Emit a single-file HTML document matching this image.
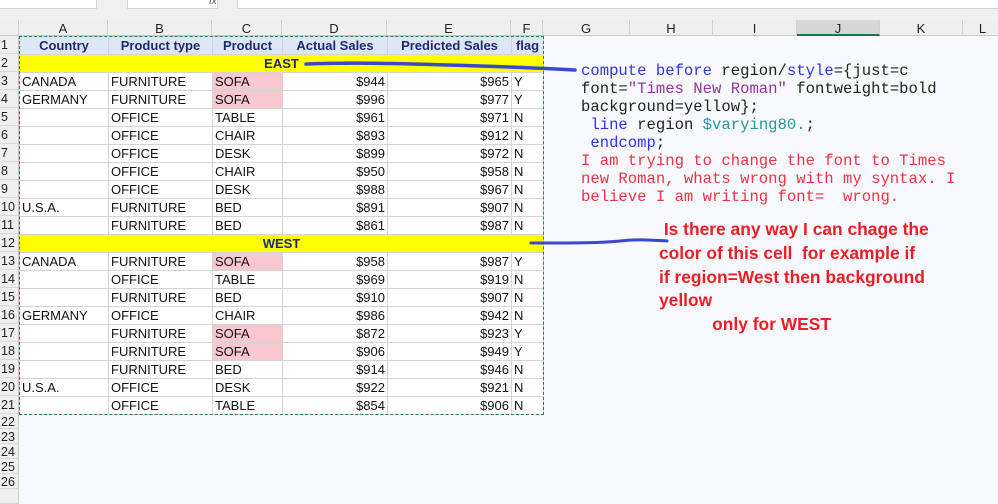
<!DOCTYPE html>
<html><head><meta charset="utf-8"><style>
*{margin:0;padding:0;box-sizing:border-box}
body{width:998px;height:496px;overflow:hidden;background:#f8f9fc;font-family:"Liberation Sans",Arial,sans-serif;position:relative}
.top{position:absolute;left:0;top:0;width:998px;height:20px;background:#f0f0f0}
.box{position:absolute;top:-2px;height:11px;background:#fff;border:1px solid #d4d4d4}
.colh{position:absolute;top:20px;left:0;width:998px;height:16px;background:#efefef;border-bottom:1px solid #c8c8c8}
.ch{position:absolute;top:0;height:16px;font-size:13px;text-align:center;line-height:18px;color:#222;border-right:1px solid #d0d0d0}
.rh{position:absolute;left:0;width:19px;background:#efefef;border-right:1px solid #c8c8c8;border-bottom:1px solid #d8d8d8;font-size:12.5px;color:#222;padding-left:1px;line-height:19px}
table{position:absolute;left:19px;top:36px;border-collapse:collapse;table-layout:fixed}
td{height:18px;border:1px solid #d4d4d4;font-size:13px;color:#111;padding:0 2px;white-space:nowrap;overflow:hidden;background:#fff;line-height:17px}
td.r{text-align:right}
tr.h td{background:#dde7f4;color:#1f2a6e;font-weight:bold;text-align:center;font-size:13px}
tr.y td{background:#ffff00;color:#1f2a6e;font-weight:bold;text-align:center}
td.p{background:#f8c7d0}
.sel{position:absolute;left:19px;top:36px;width:525px;height:379px;border:1.5px dashed #2e7d4f}
.code{position:absolute;left:581px;top:62px;font-family:"Liberation Mono",monospace;font-size:15.6px;line-height:18px;color:#222;white-space:pre}
.kw{color:#3333ee}.st{color:#993399}.tl{color:#229999}.rd{color:#ee3344}
.q{position:absolute;left:659px;top:218px;font-weight:bold;font-size:17.4px;line-height:23.8px;color:#ee1c25;white-space:pre}
</style></head><body>
<div class="top">
<div class="box" style="left:-2px;width:99px"></div>
<div class="box" style="left:127px;width:91px"></div>
<div class="box" style="left:237px;width:765px"></div>
<span style="position:absolute;left:209px;top:-4px;font-size:10px;font-style:italic;color:#555">fx</span>
</div>
<div class="colh">
<div class="ch" style="left:0;width:19px"></div>
<div class="ch" style="left:19px;width:89px">A</div>
<div class="ch" style="left:108px;width:104px">B</div>
<div class="ch" style="left:212px;width:70px">C</div>
<div class="ch" style="left:282px;width:105px">D</div>
<div class="ch" style="left:387px;width:124px">E</div>
<div class="ch" style="left:511px;width:32px">F</div>
<div class="ch" style="left:543px;width:87px">G</div>
<div class="ch" style="left:630px;width:83px">H</div>
<div class="ch" style="left:713px;width:84px">I</div>
<div class="ch" style="left:797px;width:83px;background:#d6d6d6;border-bottom:2px solid #217346">J</div>
<div class="ch" style="left:880px;width:83px">K</div>
<div class="ch" style="left:963px;width:40px">L</div>
</div>
<div class="rh" style="top:36px;height:18px">1</div>
<div class="rh" style="top:54px;height:18px">2</div>
<div class="rh" style="top:72px;height:18px">3</div>
<div class="rh" style="top:90px;height:18px">4</div>
<div class="rh" style="top:108px;height:18px">5</div>
<div class="rh" style="top:126px;height:18px">6</div>
<div class="rh" style="top:144px;height:18px">7</div>
<div class="rh" style="top:162px;height:18px">8</div>
<div class="rh" style="top:180px;height:18px">9</div>
<div class="rh" style="top:198px;height:18px">10</div>
<div class="rh" style="top:216px;height:18px">11</div>
<div class="rh" style="top:234px;height:18px">12</div>
<div class="rh" style="top:252px;height:18px">13</div>
<div class="rh" style="top:270px;height:18px">14</div>
<div class="rh" style="top:288px;height:18px">15</div>
<div class="rh" style="top:306px;height:18px">16</div>
<div class="rh" style="top:324px;height:18px">17</div>
<div class="rh" style="top:342px;height:18px">18</div>
<div class="rh" style="top:360px;height:18px">19</div>
<div class="rh" style="top:378px;height:18px">20</div>
<div class="rh" style="top:396px;height:18px">21</div>
<div class="rh" style="top:414px;height:15px;line-height:16px">22</div>
<div class="rh" style="top:429px;height:15px;line-height:16px">23</div>
<div class="rh" style="top:444px;height:15px;line-height:16px">24</div>
<div class="rh" style="top:459px;height:15px;line-height:16px">25</div>
<div class="rh" style="top:474px;height:15px;line-height:16px">26</div>
<div class="rh" style="top:489px;height:15px;line-height:16px"></div>
<table>
<colgroup><col style="width:89px"><col style="width:104px"><col style="width:70px"><col style="width:105px"><col style="width:124px"><col style="width:32px"></colgroup>
<tr class="h"><td>Country</td><td>Product type</td><td>Product</td><td>Actual Sales</td><td>Predicted Sales</td><td>flag</td></tr>
<tr class="y"><td colspan="6">EAST</td></tr>
<tr><td>CANADA</td><td>FURNITURE</td><td class="p">SOFA</td><td class="r">$944</td><td class="r">$965</td><td>Y</td></tr>
<tr><td>GERMANY</td><td>FURNITURE</td><td class="p">SOFA</td><td class="r">$996</td><td class="r">$977</td><td>Y</td></tr>
<tr><td></td><td>OFFICE</td><td>TABLE</td><td class="r">$961</td><td class="r">$971</td><td>N</td></tr>
<tr><td></td><td>OFFICE</td><td>CHAIR</td><td class="r">$893</td><td class="r">$912</td><td>N</td></tr>
<tr><td></td><td>OFFICE</td><td>DESK</td><td class="r">$899</td><td class="r">$972</td><td>N</td></tr>
<tr><td></td><td>OFFICE</td><td>CHAIR</td><td class="r">$950</td><td class="r">$958</td><td>N</td></tr>
<tr><td></td><td>OFFICE</td><td>DESK</td><td class="r">$988</td><td class="r">$967</td><td>N</td></tr>
<tr><td>U.S.A.</td><td>FURNITURE</td><td>BED</td><td class="r">$891</td><td class="r">$907</td><td>N</td></tr>
<tr><td></td><td>FURNITURE</td><td>BED</td><td class="r">$861</td><td class="r">$987</td><td>N</td></tr>
<tr class="y"><td colspan="6">WEST</td></tr>
<tr><td>CANADA</td><td>FURNITURE</td><td class="p">SOFA</td><td class="r">$958</td><td class="r">$987</td><td>Y</td></tr>
<tr><td></td><td>OFFICE</td><td>TABLE</td><td class="r">$969</td><td class="r">$919</td><td>N</td></tr>
<tr><td></td><td>FURNITURE</td><td>BED</td><td class="r">$910</td><td class="r">$907</td><td>N</td></tr>
<tr><td>GERMANY</td><td>OFFICE</td><td>CHAIR</td><td class="r">$986</td><td class="r">$942</td><td>N</td></tr>
<tr><td></td><td>FURNITURE</td><td class="p">SOFA</td><td class="r">$872</td><td class="r">$923</td><td>Y</td></tr>
<tr><td></td><td>FURNITURE</td><td class="p">SOFA</td><td class="r">$906</td><td class="r">$949</td><td>Y</td></tr>
<tr><td></td><td>FURNITURE</td><td>BED</td><td class="r">$914</td><td class="r">$946</td><td>N</td></tr>
<tr><td>U.S.A.</td><td>OFFICE</td><td>DESK</td><td class="r">$922</td><td class="r">$921</td><td>N</td></tr>
<tr><td></td><td>OFFICE</td><td>TABLE</td><td class="r">$854</td><td class="r">$906</td><td>N</td></tr>
</table>
<div class="sel"></div>
<svg style="position:absolute;left:0;top:0" width="998" height="496">
<path d="M306 64 C360 62 420 64 480 66 S560 69 575 70" stroke="#3a48d0" stroke-width="3.5" fill="none" stroke-linecap="round"/>
<path d="M531 243 C580 243 600 243 620 241 S650 240 667 241" stroke="#3a48d0" stroke-width="3" fill="none" stroke-linecap="round"/>
</svg>
<div class="code"><span class="kw">compute before</span> region/<span class="kw">style</span>={just=c
font=<span class="st">"Times New Roman"</span> fontweight=bold
background=yellow};
 <span class="kw">line</span> region <span class="tl">$varying80.</span>;
 <span class="kw">endcomp</span>;
<span class="rd">I am trying to change the font to Times
new Roman, whats wrong with my syntax. I
believe I am writing font=  wrong.</span></div>
<div class="q"> Is there any way I can chage the
color of this cell  for example if
if region=West then background
yellow
           only for WEST</div>
</body></html>
